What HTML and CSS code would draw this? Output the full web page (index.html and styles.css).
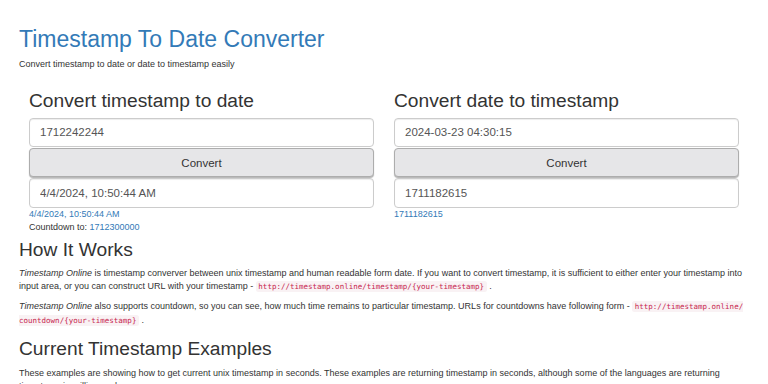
FILE: index.html
```html
<!DOCTYPE html>
<html lang="en">
<head>
    <meta charset="UTF-8">
    <title>Timestamp To Date Converter</title>
    <link rel="stylesheet" href="styles.css">
</head>
<body>

    <div class="container">
        <h1 class="title">Timestamp To Date Converter</h1>
        <p class="lead">Convert timestamp to date or date to timestamp easily</p>

        <div class="row">
            <div class="col">
                <h2>Convert timestamp to date</h2>
                <input type="text" class="field" value="1712242244">
                <button class="btn">Convert</button>
                <input type="text" class="field" value="4/4/2024, 10:50:44 AM">
                <div class="note"><a href="#">4/4/2024, 10:50:44 AM</a></div>
                <div class="note">Countdown to: <a href="#">1712300000</a></div>
            </div>
            <div class="col">
                <h2>Convert date to timestamp</h2>
                <input type="text" class="field" value="2024-03-23 04:30:15">
                <button class="btn">Convert</button>
                <input type="text" class="field" value="1711182615">
                <div class="note"><a href="#">1711182615</a></div>
            </div>
        </div>

        <h2 class="first">How It Works</h2>
        <p><em>Timestamp Online</em> is timestamp converver between unix timestamp and human readable form date. If you want to convert timestamp, it is sufficient to either enter your timestamp into input area, or you can construct URL with your timestamp - <code>http://timestamp.online/timestamp/{your-timestamp}</code> .</p>
        <p><em>Timestamp Online</em> also supports countdown, so you can see, how much time remains to particular timestamp. URLs for countdowns have following form - <code>http://timestamp.online/<wbr>countdown/{your-timestamp}</code> .</p>

        <h2 class="examples">Current Timestamp Examples</h2>
        <p>These examples are showing how to get current unix timestamp in seconds. These examples are returning timestamp in seconds, although some of the languages are returning timestamp in milliseconds.</p>
    </div>

</body>
</html>
```

FILE: styles.css
```css
body {
    margin: 0;
    padding: 0;
    font-family: "Liberation Sans", Helvetica, Arial, sans-serif;
    font-size: 9px;
    line-height: 12.8px;
    color: #333;
    background: #fff;
}
a {
    color: #337ab7;
    text-decoration: none;
}
.container {
    padding: 14px 19px 0;
}
h1, h2 {
    font-weight: 400;
    line-height: 1.1;
}
.title {
    font-size: 23px;
    color: #337ab7;
    margin: 13px 0 6px;
}
.lead {
    margin: 0 0 6px;
    line-height: 12.8px;
}
h2 {
    font-size: 19.2px;
    margin: 12.8px 0 6.4px;
}
h2.first {
    margin-top: 6px;
}
h2.examples {
    margin: 11px 0 7.5px;
}
.row {
    display: flex;
}
.col {
    flex: 1;
    padding: 0 10px;
}
.col h2 {
    margin: 13px 0 6.4px;
}
.field, .btn {
    display: block;
    box-sizing: border-box;
    width: 100%;
    height: 29.4px;
    padding: 6px 10px;
    font-family: inherit;
    font-size: 11.5px;
    border-radius: 4px;
}
.field {
    border: 1px solid #ccc;
    color: #555;
    background: #fff;
    box-shadow: inset 0 1px 1px rgba(0, 0, 0, 0.075);
}
.btn {
    margin: 1px 0;
    color: #333;
    background-color: #e6e6e8;
    border: 1px solid #adadad;
    box-shadow: 0 1px 1px rgba(0, 0, 0, 0.3);
    cursor: pointer;
}
.note {
    line-height: 12.8px;
}
p {
    margin: 0 0 6.4px;
    line-height: 12.8px;
}
code {
    font-family: "DejaVu Sans Mono", "Liberation Mono", monospace;
    font-size: 7.5px;
    padding: 1px 2.6px;
    color: #c7254e;
    background-color: #f9f2f4;
    border-radius: 2.5px;
}
```
